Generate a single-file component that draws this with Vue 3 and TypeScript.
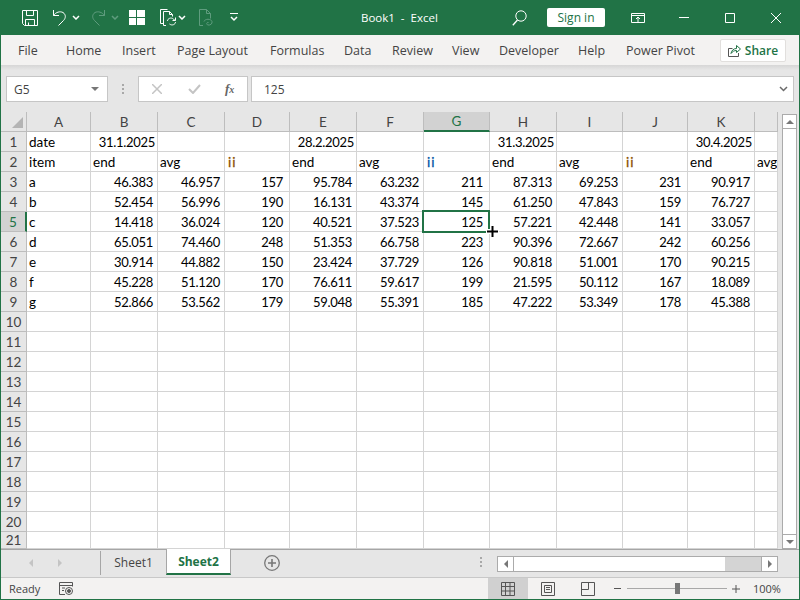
<script setup lang="ts">
// sheet data, row 3 onward: label + ten numeric columns
const columns = ['A', 'B', 'C', 'D', 'E', 'F', 'G', 'H', 'I', 'J', 'K', '']
const tabs = ['File', 'Home', 'Insert', 'Page Layout', 'Formulas', 'Data', 'Review', 'View', 'Developer', 'Help', 'Power Pivot']

const body = [
  ['a', '46.383', '46.957', '157', '95.784', '63.232', '211', '87.313', '69.253', '231', '90.917'],
  ['b', '52.454', '56.996', '190', '16.131', '43.374', '145', '61.250', '47.843', '159', '76.727'],
  ['c', '14.418', '36.024', '120', '40.521', '37.523', '125', '57.221', '42.448', '141', '33.057'],
  ['d', '65.051', '74.460', '248', '51.353', '66.758', '223', '90.396', '72.667', '242', '60.256'],
  ['e', '30.914', '44.882', '150', '23.424', '37.729', '126', '90.818', '51.001', '170', '90.215'],
  ['f', '45.228', '51.120', '170', '76.611', '59.617', '199', '21.595', '50.112', '167', '18.089'],
  ['g', '52.866', '53.562', '179', '59.048', '55.391', '185', '47.222', '53.349', '178', '45.388'],
]

const rows: string[][] = [
  ['date', '31.1.2025', '', '', '28.2.2025', '', '', '31.3.2025', '', '', '30.4.2025', ''],
  ['item', 'end', 'avg', 'ii', 'end', 'avg', 'ii', 'end', 'avg', 'ii', 'end', 'avg'],
  ...body.map((r) => [...r, '']),
]
while (rows.length < 21) rows.push(Array(12).fill(''))

function cellClass(text: string, r: number, c: number) {
  return {
    num: /^\d+\.\d{3}$/.test(text),
    int: /^\d{3}$/.test(text),
    date: /^\d+\.\d+\.\d{4}$/.test(text),
    gold: text === 'ii' && c !== 6,
    blue: text === 'ii' && c === 6,
    active: r === 4 && c === 6,
  }
}
</script>

<template>
  <div class="window">
    <header class="titlebar">
      <svg class="ic-save" width="16" height="16" viewBox="0 0 16 16" fill="none" stroke="#fff"><path d="M.5.5h15v15H2.5l-2-2zM4.500.5v5h7v-5M3.500 15.500v-6h9v6M6.500 12.500v3" /></svg>
      <svg class="ic-undo" width="15" height="17" viewBox="0 0 15 17" fill="none" stroke="#fff"><path d="M1.500 1v5.500H7M1.500 6.500C4 3 8 2 11 3.500c3 2 3 5.500.5 8L6.500 16.500" /></svg>
      <svg class="ic-chev" width="8" height="5" viewBox="0 0 8 5" fill="none" stroke="#fff" stroke-width="1.500"><path d="M1 1l3 3 3-3" /></svg>
      <svg class="ic-redo" width="15" height="17" viewBox="0 0 15 17" fill="none" stroke="#5f9c7e"><path d="M13.500 1v5.500H8M13.500 6.500C11 3 7 2 4 3.500c-3 2-3 5.500-.5 8L8.500 16.500" /></svg>
      <svg class="ic-chev" width="8" height="5" viewBox="0 0 8 5" fill="none" stroke="#5f9c7e" stroke-width="1.500"><path d="M1 1l3 3 3-3" /></svg>
      <svg class="ic-grid" width="16" height="15" viewBox="0 0 16 15" fill="#fff"><path d="M0 0h7v7H0zM8 0h8v7H8zM0 8h7v7H0zM8 8h8v7H8z" /></svg>
      <svg class="ic-pages" width="17" height="17" viewBox="0 0 17 17" fill="none" stroke="#fff"><path d="M3.500 14.500H.5V.5h7M3.500 16.500V2.500h6l3 3v2M3.500 16.500H6M12.500 5.500h-3v-3" /><path d="M7.500 12c0-2.500 3.500-4 6-2l1.500 1.500M15.500 8.500v3h-3M15.500 13c0 2.500-3.500 4-6 2" /></svg>
      <svg class="ic-chev2" width="8" height="5" viewBox="0 0 8 5" fill="none" stroke="#fff" stroke-width="1.500"><path d="M1 1l3 3 3-3" /></svg>
      <svg class="ic-doc" width="15" height="17" viewBox="0 0 15 17" fill="none" stroke="#5f9c7e"><path d="M4 16.500H.5V.5h7l4 4v5M7.500.5v4h4" /><path d="M5 12.500c1-3 7-3 8 0 .5 2-1.500 4-4 3.500-2-.5-1.500-3 .5-2.500" /></svg>
      <svg class="ic-custom" width="8" height="9" viewBox="0 0 8 9" fill="none" stroke="#fff"><path d="M0 .5h8" /><path d="M1 4l3 3 3-3" stroke-width="1.500" /></svg>
      <div class="doc-title">Book1&nbsp; -&nbsp; Excel</div>
      <svg class="ic-search" width="15" height="16" viewBox="0 0 15 16" fill="none" stroke="#fff"><circle cx="9" cy="6" r="5.200" /><path d="M5.500 10L.8 15.200" stroke-width="1.300" /></svg>
      <button class="signin">Sign in</button>
      <svg class="ic-display" width="14" height="10" viewBox="0 0 14 10" fill="none" stroke="#fff"><path d="M.5.5h13v9H.5zM.5 2.500h13M7 9V4.500M5 6l2-2 2 2" /></svg>
      <svg class="ic-min" width="10" height="1" viewBox="0 0 10 1"><path d="M0 0h10v1H0z" fill="#fff" /></svg>
      <svg class="ic-max" width="10" height="10" viewBox="0 0 10 10" fill="none" stroke="#fff"><path d="M.5.5h9v9h-9z" /></svg>
      <svg class="ic-close" width="10" height="10" viewBox="0 0 10 10" fill="none" stroke="#fff"><path d="M0 0l10 10M10 0L0 10" /></svg>
    </header>

    <nav class="menu">
      <span v-for="tab in tabs" :key="tab">{{ tab }}</span>
      <button class="share">
        <svg width="13" height="13" viewBox="0 0 13 13" fill="none" stroke="#217346"><path d="M4.500 4.500H.5v8h10V9" stroke="#555" /><path d="M3 9.500c.5-3 2.500-5 5.500-5V1.500l4 3.500-4 3.500V6.500c-2.500 0-4 1-5.500 3z" /></svg>
        Share
      </button>
    </nav>

    <section class="formula">
      <div class="namebox">
        <span>G5</span>
        <i class="caret" />
      </div>
      <div class="grip"><i /><i /><i /></div>
      <div class="fx-box">
        <svg width="10" height="10" viewBox="0 0 10 10" stroke="#c4c4c4" stroke-width="1.500"><path d="M0 0l10 10M10 0L0 10" /></svg>
        <svg width="13" height="10" viewBox="0 0 13 10" fill="none" stroke="#c4c4c4" stroke-width="2"><path d="M1 5l4 4 7-8" /></svg>
        <span class="fx">f<small>x</small></span>
      </div>
      <div class="input">
        <span>125</span>
        <svg width="9" height="6" viewBox="0 0 9 6" fill="none" stroke="#6a6a6a" stroke-width="1.500"><path d="M1 1l3.500 3.500L8 1" /></svg>
      </div>
    </section>

    <section class="sheet">
      <div class="grid">
        <div class="corner"><i /></div>
        <div v-for="(col, c) in columns" :key="c" class="col-head" :class="{ sel: c === 6 }">{{ col }}</div>
        <template v-for="(row, r) in rows" :key="r">
          <div class="row-head" :class="{ sel: r === 4 }">{{ r + 1 }}</div>
          <div v-for="(text, c) in row" :key="c" class="cell" :class="cellClass(text, r, c)">
            <span>{{ text }}</span>
            <template v-if="r === 4 && c === 6">
              <i class="outline" />
              <i class="handle" />
              <svg class="cursor" width="13" height="13" viewBox="0 0 13 13"><path d="M4.500 0h4v4.500H13v4H8.500V13h-4V8.500H0v-4h4.500z" fill="#fff" /><path d="M5.500 1h2v4.500H12v2H7.500V12h-2V7.500H1v-2h4.500z" fill="#000" /></svg>
            </template>
          </div>
        </template>
      </div>
      <div class="vscroll">
        <div class="sb-btn"><i class="tri up" /></div>
        <div class="vtrack" />
        <div class="sb-btn"><i class="tri down" /></div>
      </div>
    </section>

    <section class="tabbar">
      <div class="navs"><i class="tri left faint" /><i class="tri right faint" /></div>
      <div class="tab">Sheet1</div>
      <div class="tab current">Sheet2</div>
      <svg class="add" width="16" height="16" viewBox="0 0 16 16" fill="none" stroke="#777"><circle cx="8" cy="8" r="7.300" stroke-width="1.300" /><path d="M8 4v8M4 8h8" stroke-width="1.600" /></svg>
      <div class="grip h"><i /><i /><i /></div>
      <div class="hscroll">
        <div class="hbtn"><i class="tri left" /></div>
        <div class="hthumb" />
        <div class="hrest" />
        <div class="hbtn"><i class="tri right" /></div>
      </div>
    </section>

    <footer class="status">
      <span class="ready">Ready</span>
      <svg class="macro" width="14" height="13" viewBox="0 0 14 13" fill="none" stroke="#555"><path d="M6 12.500H.5V.5h13v4M.5 3.500h13M3 6h3M3 8.500h2" /><circle cx="10" cy="9" r="3.500" /><circle cx="10" cy="9" r="1.500" fill="#555" /></svg>
      <div class="views">
        <div class="view on">
          <svg width="14" height="14" viewBox="0 0 14 14" fill="none" stroke="#555"><path d="M.5.5h13v13H.5zM.5 4.500h13M.5 9h13M4.500.5v13M9 .5v13" /></svg>
        </div>
        <div class="view">
          <svg width="14" height="14" viewBox="0 0 14 14" fill="none" stroke="#555"><path d="M.5.5h13v13H.5zM3.500 3.500h7v7h-7zM5 5.500h4M5 7.500h4" /></svg>
        </div>
        <div class="view">
          <svg width="14" height="14" viewBox="0 0 14 14" fill="none" stroke="#555"><path d="M.5 13.500V.5h13v13zM.5 7.500h7V.5" /></svg>
        </div>
      </div>
      <div class="zoom">
        <i class="minus" />
        <div class="slider"><i /></div>
        <svg width="8" height="8" viewBox="0 0 8 8" stroke="#555"><path d="M0 4h8M4 0v8" /></svg>
        <span>100%</span>
      </div>
    </footer>
  </div>
</template>

<style scoped>
.window {
  box-sizing: border-box;
  width: 800px;
  height: 600px;
  display: flex;
  flex-direction: column;
  border: solid #217346;
  border-width: 0 1px 1px;
  background: #e6e6e6;
  overflow: hidden;
  font-family: 'Open Sans', 'Noto Sans', sans-serif;
  color: #444;
}
.titlebar {
  height: 35px;
  flex: none;
  display: flex;
  align-items: center;
  padding-left: 22px;
  margin: 0 -1px;
  background: #217346;
  color: #fff;
}
.titlebar svg {
  flex: none;
}
.ic-undo { margin-left: 14px; }
.ic-chev { margin-left: 5px; }
.ic-redo { margin-left: 11px; }
.ic-grid { margin-left: 10px; }
.ic-pages { margin-left: 15px; }
.ic-chev2 { margin-left: 1px; }
.ic-doc { margin-left: 13px; }
.ic-custom { margin-left: 16px; }
.doc-title {
  width: 152px;
  margin-left: 123px;
  font-size: 11.500px;
  white-space: nowrap;
}
.ic-search { margin-left: -1px; }
.signin {
  width: 58px;
  height: 19px;
  margin-left: 20px;
  padding: 0;
  border: 0;
  border-radius: 2px;
  background: #fff;
  color: #217346;
  font: 12px 'Open Sans', sans-serif;
}
.ic-display { margin-left: 26px; }
.ic-min { margin-left: 34px; }
.ic-max { margin-left: 36px; }
.ic-close { margin-left: 36px; }

.menu {
  height: 30px;
  flex: none;
  display: grid;
  grid-template-columns: 48px 56px 55px 93px 74px 48px 60px 47px 79px 48px 94px 66px;
  align-items: center;
  padding-left: 17px;
  background: #f3f2f1;
  font-size: 12.500px;
  white-space: nowrap;
}
.share {
  display: flex;
  align-items: center;
  justify-content: center;
  gap: 4px;
  height: 23px;
  padding: 0;
  border: 1px solid #e1dfdd;
  border-radius: 2px;
  background: #fff;
  color: #217346;
  font: 600 12px 'Open Sans', sans-serif;
}

.formula {
  height: 47px;
  flex: none;
  box-sizing: border-box;
  display: flex;
  align-items: flex-start;
  padding: 11px 5px 0;
  background: linear-gradient(#d6d6d6, #e6e6e6 5px);
}
.namebox,
.fx-box,
.input {
  box-sizing: border-box;
  height: 26px;
  display: flex;
  align-items: center;
  background: #fff;
  border: 1px solid #c6c6c6;
  font-size: 12px;
}
.namebox {
  width: 102px;
  justify-content: space-between;
  padding: 0 8px 0 7px;
}
.caret {
  border: 4px solid transparent;
  border-top: 4px solid #777;
  border-bottom: 0;
  border-left-width: 4px;
}
.grip {
  width: 30px;
  display: flex;
  flex-direction: column;
  align-items: center;
  gap: 2px;
  padding-top: 8px;
}
.grip i {
  width: 2px;
  height: 2px;
  background: #a8a8a8;
}
.fx-box {
  width: 110px;
  padding-left: 13px;
}
.fx-box svg + svg {
  margin-left: 26px;
}
.fx {
  margin-left: 24px;
  font: italic bold 13px 'Liberation Serif', serif;
  color: #666;
}
.fx small {
  font-size: 10px;
}
.input {
  flex: 1;
  margin-left: 3px;
  padding: 0 5px 0 12px;
  justify-content: space-between;
}

.sheet {
  height: 437px;
  flex: none;
  display: flex;
  overflow: hidden;
}
.grid {
  box-sizing: border-box;
  width: 777px;
  height: 437px;
  flex: none;
  display: grid;
  grid-template-columns: 26px 64px 67px 67px 65px 67px 67px 66px 67px 66px 65px 67px 23px;
  grid-template-rows: repeat(21, 20px) 17px;
  border-right: 1px solid #9c9c9c;
  background: #fff;
  font-family: Lato, 'Open Sans', sans-serif;
  font-size: 13.500px;
  color: #000;
}
.corner,
.col-head,
.row-head {
  box-sizing: border-box;
  background: #e6e6e6;
  color: #444;
  display: flex;
  align-items: center;
  justify-content: center;
  border-right: 1px solid #bdbdbd;
  border-bottom: 1px solid #bdbdbd;
}
.corner {
  position: relative;
}
.corner i {
  position: absolute;
  right: 3px;
  bottom: 3px;
  border: solid transparent;
  border-width: 0 0 11px 11px;
  border-bottom-color: #b4b4b4;
}
.col-head.sel {
  background: #d2d2d2;
  color: #217346;
  border-bottom: 2px solid #217346;
}
.row-head.sel {
  background: #d2d2d2;
  color: #217346;
  border-right: 2px solid #217346;
}
.cell {
  box-sizing: border-box;
  position: relative;
  display: flex;
  align-items: center;
  padding: 0 2px;
  border-right: 1px solid #d4d4d4;
  border-bottom: 1px solid #d4d4d4;
  white-space: nowrap;
  overflow: hidden;
}
.cell.num,
.cell.int,
.cell.date {
  justify-content: flex-end;
  font-size: 13px;
  letter-spacing: -0.3px;
}
.cell.num {
  padding-right: 4px;
}
.cell.int {
  padding-right: 6px;
}
.cell.gold,
.cell.blue {
  letter-spacing: 1px;
  padding-left: 3px;
  -webkit-text-stroke: 0.3px currentColor;
}
.cell.gold { color: #8a5000; }
.cell.blue { color: #0055a5; }
.cell.active {
  overflow: visible;
}
.outline {
  position: absolute;
  inset: -2px -1px -2px -2px;
  border: 2px solid #217346;
  z-index: 2;
}
.handle {
  position: absolute;
  right: -2px;
  bottom: -3px;
  width: 5px;
  height: 5px;
  background: #217346;
  border: 1px solid #fff;
  box-sizing: border-box;
  z-index: 3;
}
.cursor {
  position: absolute;
  left: 62px;
  top: 13px;
  z-index: 4;
}

.vscroll {
  flex: 1;
  box-sizing: border-box;
  display: flex;
  flex-direction: column;
  padding: 2px 2px 0 4px;
}
.sb-btn {
  box-sizing: border-box;
  height: 15px;
  flex: none;
  display: flex;
  align-items: center;
  justify-content: center;
  background: #fff;
  border: 1px solid #ababab;
}
.vtrack {
  flex: 1;
  background: #fff;
  border: solid #ababab;
  border-width: 0 1px;
}
.tri {
  width: 0;
  height: 0;
  border: 4px solid transparent;
}
.tri.up { border-top: 0; border-bottom-color: #777; }
.tri.down { border-bottom: 0; border-top-color: #777; }
.tri.left { border-left: 0; border-right-color: #777; }
.tri.right { border-right: 0; border-left-color: #777; }
.tri.faint.left { border-right-color: #c4c4c4; }
.tri.faint.right { border-left-color: #c4c4c4; }

.tabbar {
  height: 28px;
  flex: none;
  box-sizing: border-box;
  display: flex;
  border-top: 1px solid #a6a6a6;
  font-size: 12px;
}
.navs {
  width: 100px;
  box-sizing: border-box;
  display: flex;
  align-items: center;
  gap: 25px;
  padding-left: 28px;
  height: 24px;
  flex: none;
  border-right: 1px solid #a6a6a6;
  margin-top: 1px;
}
.tab {
  box-sizing: border-box;
  height: 25px;
  display: flex;
  align-items: center;
  justify-content: center;
  width: 65px;
}
.tab.current {
  margin-top: -1px;
  height: 26px;
  background: #fff;
  color: #217346;
  font-weight: 700;
  border-bottom: 2px solid #217346;
  border-left: 1px solid #a6a6a6;
  border-right: 1px solid #a6a6a6;
}
.add {
  margin: 5px 0 0 33px;
}
.grip.h {
  width: 8px;
  margin-left: 197px;
  padding-top: 7px;
}
.hscroll {
  box-sizing: border-box;
  width: 281px;
  height: 16px;
  margin: 6px 0 0 12px;
  flex: none;
  display: flex;
  border: 1px solid #ababab;
  background: #d4d4d4;
}
.hbtn {
  width: 15px;
  flex: none;
  display: flex;
  align-items: center;
  justify-content: center;
  background: #fff;
}
.hbtn:first-child { border-right: 1px solid #ababab; }
.hbtn:last-child { border-left: 1px solid #ababab; }
.hthumb {
  width: 211px;
  background: #fff;
}
.hrest { flex: 1; }

.status {
  flex: 1;
  display: flex;
  align-items: center;
  box-sizing: border-box;
  border-top: 1px solid #c8c8c8;
  background: #f3f2f1;
  font-size: 11px;
}
.ready {
  margin-left: 8px;
  width: 50px;
}
.macro { flex: none; }
.views {
  display: flex;
  align-self: stretch;
  margin-left: 415px;
}
.view {
  width: 40px;
  display: flex;
  align-items: center;
  justify-content: center;
}
.view.on { background: #d0d0d0; }
.zoom {
  display: flex;
  align-items: center;
  margin-left: 6px;
}
.minus {
  width: 7px;
  height: 1px;
  background: #555;
}
.slider {
  width: 100px;
  height: 1px;
  margin: 0 5px 0 6px;
  background: #a8a8a8;
  display: flex;
  justify-content: center;
  align-items: center;
}
.slider i {
  width: 5px;
  height: 11px;
  flex: none;
  background: #777;
}
.zoom span {
  margin-left: 13px;
}
</style>

<style>
html,
body {
  margin: 0;
  background: #e6e6e6;
}
</style>
